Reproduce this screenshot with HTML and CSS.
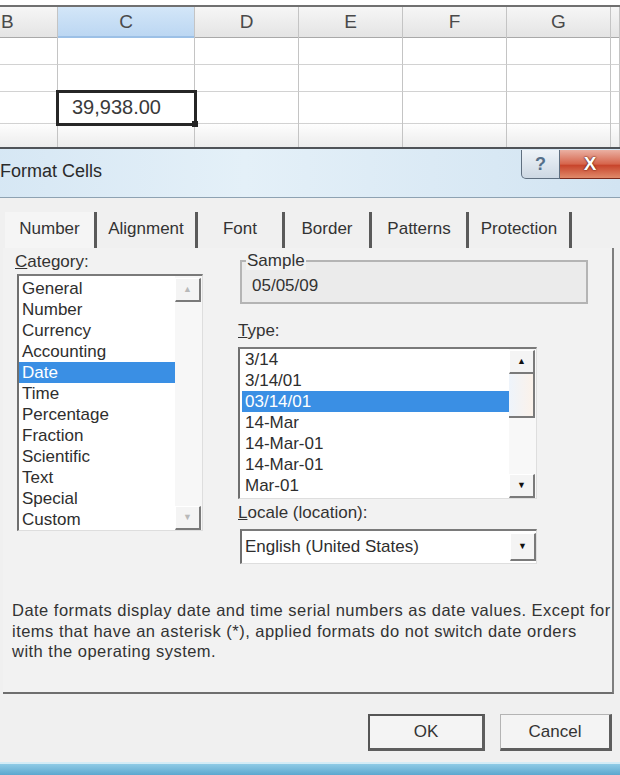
FILE: index.html
```html
<!DOCTYPE html>
<html lang="en">
<head>
  <meta charset="UTF-8">
  <title>Format Cells</title>
  <link rel="stylesheet" href="styles.css">
</head>
<body>
<div class="sheet">
  <div class="sheet-row sheet-head">
    <div class="col-b">B</div>
    <div class="col-sel">C</div>
    <div>D</div>
    <div>E</div>
    <div>F</div>
    <div>G</div>
    <div></div>
  </div>
  <div class="sheet-row r1">
    <div></div><div></div><div></div><div></div><div></div><div></div><div></div>
  </div>
  <div class="sheet-row r2">
    <div></div><div></div><div></div><div></div><div></div><div></div><div></div>
  </div>
  <div class="sheet-row r3">
    <div></div><div class="active-cell">39,938.00<span class="fill-handle"></span></div><div></div><div></div><div></div><div></div><div></div>
  </div>
  <div class="sheet-row fade">
    <div></div><div></div><div></div><div></div><div></div><div></div><div></div>
  </div>
</div>

<div class="dialog">
  <div class="titlebar">
    <span class="title">Format Cells</span>
    <div class="caption-btns">
      <span class="btn-help">?</span>
      <span class="btn-close">X</span>
    </div>
  </div>

  <div class="tabs">
    <div class="tab active w-number">Number</div>
    <div class="tab w-align">Alignment</div>
    <div class="tab w-font">Font</div>
    <div class="tab w-border">Border</div>
    <div class="tab w-pattern">Patterns</div>
    <div class="tab w-protect">Protection</div>
  </div>

  <div class="panel">
    <div class="columns">
      <div class="col-left">
        <div class="label"><u>C</u>ategory:</div>
        <div class="listbox category">
          <div class="items">
            <div>General</div>
            <div>Number</div>
            <div>Currency</div>
            <div>Accounting</div>
            <div class="selected">Date</div>
            <div>Time</div>
            <div>Percentage</div>
            <div>Fraction</div>
            <div>Scientific</div>
            <div>Text</div>
            <div>Special</div>
            <div>Custom</div>
          </div>
          <div class="scroll">
            <span class="sbtn disabled">&#9650;</span>
            <span class="track"></span>
            <span class="sbtn disabled">&#9660;</span>
          </div>
        </div>
      </div>

      <div class="col-right">
        <fieldset class="sample">
          <legend>Sample</legend>
          <div>05/05/09</div>
        </fieldset>

        <div class="label type-label"><u>T</u>ype:</div>
        <div class="listbox types">
          <div class="items">
            <div>3/14</div>
            <div>3/14/01</div>
            <div class="selected">03/14/01</div>
            <div>14-Mar</div>
            <div>14-Mar-01</div>
            <div>14-Mar-01</div>
            <div>Mar-01</div>
          </div>
          <div class="scroll">
            <span class="sbtn">&#9650;</span>
            <span class="thumb"></span>
            <span class="track"></span>
            <span class="sbtn">&#9660;</span>
          </div>
        </div>

        <div class="label locale-label"><u>L</u>ocale (location):</div>
        <div class="combo">
          <span class="combo-text">English (United States)</span>
          <span class="sbtn">&#9660;</span>
        </div>
      </div>
    </div>

    <p class="desc">Date formats display date and time serial numbers as date values. Except for<br>items that have an asterisk (*), applied formats do not switch date orders<br>with the operating system.</p>
  </div>

  <div class="actions">
    <button class="push default ok">OK</button>
    <button class="push cancel">Cancel</button>
  </div>

  <div class="frame-bottom"></div>
</div>
</body>
</html>
```

FILE: styles.css
```css
html, body {
  margin: 0;
  width: 620px;
  height: 775px;
  overflow: hidden;
  background-color: #f0f0f0;
  font-family: "Liberation Sans", Arial, sans-serif;
  color: #2e2e2e;
}

/* spreadsheet behind the dialog */
.sheet {
  height: 147px;
  padding-top: 5px;
  box-sizing: border-box;
  background-color: #fff;
}
.sheet-row {
  display: grid;
  grid-template-columns: 58px 137px 104px 104px 104px 104px 9px;
}
.sheet-row > div {
  border-right: 1px solid #c4c4c4;
  border-bottom: 1px solid #d2d2d2;
}
.sheet-head {
  height: 30px;
  border-top: 2px solid #707070;
  background: linear-gradient(#f6f6f6, #e4e4e4);
}
.sheet-head > div {
  font-size: 19px;
  line-height: 29px;
  text-align: center;
  color: #4a4a4a;
  border-bottom-color: #a9a9a9;
}
.sheet-head .col-b {
  text-align: left;
  padding-left: 1px;
}
.sheet-head .col-sel {
  background: linear-gradient(#d3e6f8, #bcd7f2);
  border-bottom: 2px solid #9cc0e6;
}
.r1 { height: 28px; }
.r2 { height: 27px; }
.r3 { height: 30px; }
.fade {
  height: 25px;
  background: linear-gradient(#fff, #ececec);
}
.fade > div {
  border-bottom: none;
}
.active-cell {
  position: relative;
  outline: 3px solid #262626;
  outline-offset: -1px;
  font-size: 20px;
  line-height: 31px;
  padding-left: 14px;
  color: #3a3a3a;
}
.fill-handle {
  position: absolute;
  right: -4px;
  bottom: -4px;
  width: 6px;
  height: 6px;
  background-color: #262626;
}

/* dialog */
.dialog {
  width: 626px;
  margin-left: -6px;
}
.titlebar {
  height: 48px;
  display: flex;
  justify-content: space-between;
  border-top: 2px solid #4f5358;
  border-bottom: 1px solid #8ea2b2;
  background: linear-gradient(90deg, #d6e7f4, #e4f0f8 40%, #d2e4f2);
}
.title {
  padding: 12px 0 0 6px;
  font-size: 18px;
  color: #2a2a2a;
}
.caption-btns {
  display: flex;
  height: 29px;
  margin-top: 1px;
}
.btn-help {
  width: 37px;
  border: 1px solid #5f6f80;
  border-top: none;
  border-radius: 0 0 0 5px;
  background: linear-gradient(#eef3f8, #cdd8e3);
  text-align: center;
  font-size: 18px;
  font-weight: bold;
  line-height: 28px;
  color: #55708a;
}
.btn-close {
  width: 60px;
  border-bottom: 1px solid #7a2a1c;
  background: linear-gradient(#eab0a2, #d6654c 50%, #c8452c 55%, #e08a6a);
  text-align: center;
  font-size: 19px;
  font-weight: bold;
  line-height: 28px;
  color: #fff;
  text-shadow: 0 0 2px #5a1a10, 0 0 1px #5a1a10;
}

/* tabs */
.tabs {
  display: flex;
  height: 36px;
  margin: 14px 0 0 11px;
}
.tab {
  box-sizing: border-box;
  border-right: 3px solid #5a5a5a;
  font-size: 17px;
  line-height: 34px;
  text-align: center;
  color: #333;
}
.tab.active {
  background-color: #f5f5f5;
}
.w-number  { width: 92px; }
.w-align   { width: 101px; }
.w-font    { width: 87px; }
.w-border  { width: 87px; }
.w-pattern { width: 97px; }
.w-protect { width: 103px; }

.panel {
  box-sizing: border-box;
  height: 446px;
  margin: 0 6px 0 9px;
  padding: 4px 0 0 12px;
  border-right: 2px solid #7e7e7e;
  border-bottom: 2px solid #6e6e6e;
  background-color: #f2f2f2;
}
.columns {
  display: flex;
  gap: 35px;
}
.col-left {
  width: 188px;
}
.col-right {
  width: 352px;
}
.label {
  font-size: 17px;
  line-height: 20px;
  color: #333;
}

.listbox {
  display: flex;
  box-sizing: border-box;
  background-color: #fff;
  border-top: 2px solid #7a7a7a;
  border-left: 2px solid #6f6f6f;
  border-right: 1px solid #dedede;
  border-bottom: 1px solid #dedede;
}
.items {
  flex: 1;
  font-size: 17px;
  line-height: 21px;
  color: #2e2e2e;
}
.items > div {
  padding-left: 3px;
  white-space: nowrap;
}
.items .selected {
  background-color: #3a8fe4;
  color: #fff;
}
.category {
  height: 257px;
  margin: 2px 0 0 2px;
  width: 186px;
}
.category .items {
  padding-top: 2px;
}
.scroll {
  display: flex;
  flex-direction: column;
  width: 27px;
  background-color: #f7f7f7;
}
.category .scroll {
  padding-top: 2px;
}
.track {
  flex: 1;
}
.sbtn {
  display: block;
  box-sizing: border-box;
  width: 26px;
  height: 24px;
  background-color: #f4f4f4;
  border-top: 1px solid #fff;
  border-left: 1px solid #fff;
  border-right: 2px solid #7a7a7a;
  border-bottom: 2px solid #7a7a7a;
  font-size: 9px;
  line-height: 21px;
  text-align: center;
  color: #111;
}
.sbtn.disabled {
  color: #b9b9b9;
}

.sample {
  box-sizing: border-box;
  width: 348px;
  height: 52px;
  margin: 0 0 0 2px;
  padding: 6px 10px 4px 10px;
  border: 2px solid #b4b4b4;
  background-color: #ebebeb;
  font-size: 17px;
  line-height: 20px;
  color: #333;
}
.sample legend {
  margin-left: -6px;
  padding: 0 1px;
  font-size: 17px;
  line-height: 18px;
  background-color: #f2f2f2;
}
.type-label {
  margin-top: 17px;
}
.types {
  width: 299px;
  height: 152px;
  margin-top: 6px;
}
.types .items > div {
  margin-left: 2px;
}
.types .scroll {
  padding-top: 1px;
  background-color: #f8f8f8;
}
.thumb {
  display: block;
  box-sizing: border-box;
  width: 26px;
  height: 44px;
  background: linear-gradient(90deg, #eef4fb, #fbf2ea);
  border-right: 2px solid #7a7a7a;
  border-bottom: 2px solid #7a7a7a;
}
.locale-label {
  margin-top: 4px;
}
.combo {
  display: flex;
  align-items: center;
  justify-content: space-between;
  box-sizing: border-box;
  width: 297px;
  height: 35px;
  margin: 6px 0 0 2px;
  padding: 0 0 0 3px;
  background-color: #fff;
  border-top: 2px solid #7a7a7a;
  border-left: 2px solid #6f6f6f;
  border-right: 1px solid #dedede;
  border-bottom: 1px solid #dedede;
}
.combo-text {
  font-size: 17px;
  color: #2e2e2e;
}
.combo .sbtn {
  height: 28px;
  line-height: 25px;
}

.desc {
  margin: 36px 0 0 -3px;
  font-size: 16.5px;
  letter-spacing: 0.48px;
  line-height: 20.5px;
  white-space: nowrap;
  color: #333;
}

/* buttons */
.actions {
  display: flex;
  justify-content: flex-end;
  gap: 15px;
  margin-top: 20px;
  padding-right: 8px;
}
.push {
  height: 37px;
  padding: 0;
  background-color: #f4f4f4;
  border-top: 1px solid #b4b4b4;
  border-left: 1px solid #b4b4b4;
  border-right: 3px solid #5e5e5e;
  border-bottom: 3px solid #5e5e5e;
  font-family: "Liberation Sans", Arial, sans-serif;
  font-size: 17px;
  color: #333;
}
.push.default {
  border-top: 2px solid #555;
  border-left: 2px solid #555;
}
.ok { width: 117px; }
.cancel { width: 112px; }

.frame-bottom {
  height: 14px;
  margin-top: 11px;
  border-top: 2px solid #d4ecf6;
  background: linear-gradient(#8fcbe6, #4e9dc8);
}
```
